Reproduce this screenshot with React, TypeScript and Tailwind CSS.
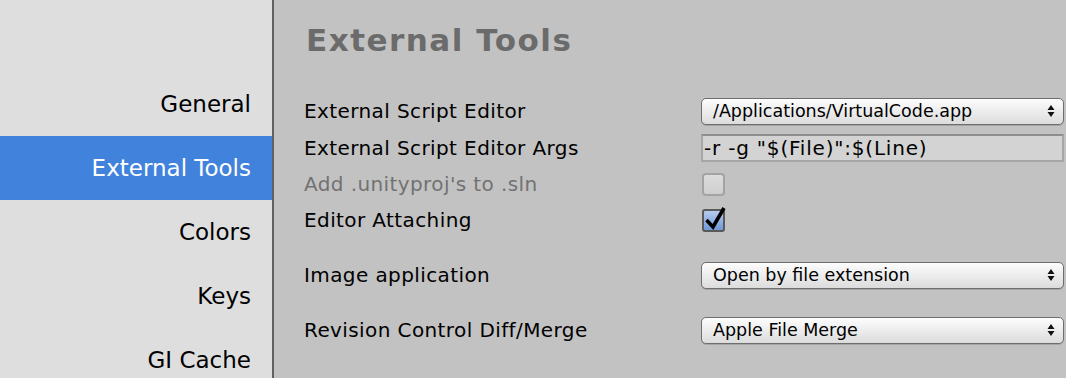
import type { ReactNode } from "react";

const font = { fontFamily: '"DejaVu Sans", "Liberation Sans", sans-serif' };

const sections = ["General", "External Tools", "Colors", "Keys", "GI Cache"];

export default function App() {
  return (
    <div className="flex w-[1066px] h-[378px] overflow-hidden bg-[#c2c2c2]" style={font}>
      <aside className="w-[274px] shrink-0 bg-[#dedede] border-r-2 border-[#606060] pt-[72px]">
        {sections.map((name) => (
          <div
            key={name}
            className={
              name === "External Tools"
                ? "h-16 flex items-center justify-end pr-[21px] bg-[#4182dc] text-white text-[23px]"
                : "h-16 flex items-center justify-end pr-[21px] text-black text-[23px]"
            }
          >
            {name}
          </div>
        ))}
      </aside>

      <main className="flex-1 pl-[30px] pr-[2px]">
        <h1 className="h-[80px] flex items-center pl-[2px] text-[31px] font-bold tracking-[1.5px] text-[#6b6b6b]">
          External Tools
        </h1>

        <div className="flex flex-col mt-[17px]">
          <Row className="h-[28px]" label="External Script Editor">
            <Popup value="/Applications/VirtualCode.app" />
          </Row>
          <Row className="h-[28px] mt-[9px]" label="External Script Editor Args">
            <div className="h-[28px] bg-[#d3d3d3] border-2 border-[#a6a6a6] border-t-[#8e8e8e] flex items-center pl-[1px] text-[20px] tracking-[0.8px] text-black">
              -r -g "$(File)":$(Line)
            </div>
          </Row>
          <Row className="h-[24px] mt-[10px]" label="Add .unityproj's to .sln" disabled>
            <Checkbox />
          </Row>
          <Row className="h-[24px] mt-[12px]" label="Editor Attaching">
            <Checkbox checked />
          </Row>
          <Row className="h-[28px] mt-[29px]" label="Image application">
            <Popup value="Open by file extension" />
          </Row>
          <Row className="h-[28px] mt-[27px]" label="Revision Control Diff/Merge">
            <Popup value="Apple File Merge" />
          </Row>
        </div>
      </main>
    </div>
  );
}

function Row({
  label,
  className,
  disabled,
  children,
}: {
  label: string;
  className: string;
  disabled?: boolean;
  children: ReactNode;
}) {
  return (
    <div className={`flex items-center ${className}`}>
      <div
        className={`w-[397px] shrink-0 text-[20px] tracking-[0.4px] ${disabled ? "text-[#727272]" : "text-black"}`}
      >
        {label}
      </div>
      <div className="flex-1">{children}</div>
    </div>
  );
}

const Popup = ({ value }: { value: string }) => (
  <div className="h-[27px] rounded-[5px] border border-[#6e6e6e] bg-gradient-to-b from-[#fdfdfd] to-[#dcdcdc] flex items-center justify-between pl-[11px] pr-[8px] text-[17.5px] text-black shadow-[0_1px_0_rgba(0,0,0,0.15)]">
    <span>{value}</span>
    <svg width="8" height="14" viewBox="0 0 8 14">
      <path d="M4 1 L7.5 6 H0.5 Z M4 13 L7.5 8 H0.5 Z" fill="#111" />
    </svg>
  </div>
);

const Checkbox = ({ checked }: { checked?: boolean }) =>
  checked ? (
    <div className="relative w-[23px] h-[23px] ml-[1px] rounded-[3px] border-2 border-[#5a5a5a] bg-gradient-to-b from-[#b7cdef] to-[#6e98d6]">
      <svg className="absolute -top-[6px] left-[0px]" width="24" height="26" viewBox="0 0 24 26">
        <path d="M2.5 15 L9 22 L20 3" fill="none" stroke="#000" strokeWidth="3.6" strokeLinejoin="miter" />
      </svg>
    </div>
  ) : (
    <div className="w-[23px] h-[23px] ml-[1px] rounded-[4px] border-2 border-[#a3a3a3] bg-gradient-to-b from-[#dcdcdc] to-[#cfcfcf]" />
  );
